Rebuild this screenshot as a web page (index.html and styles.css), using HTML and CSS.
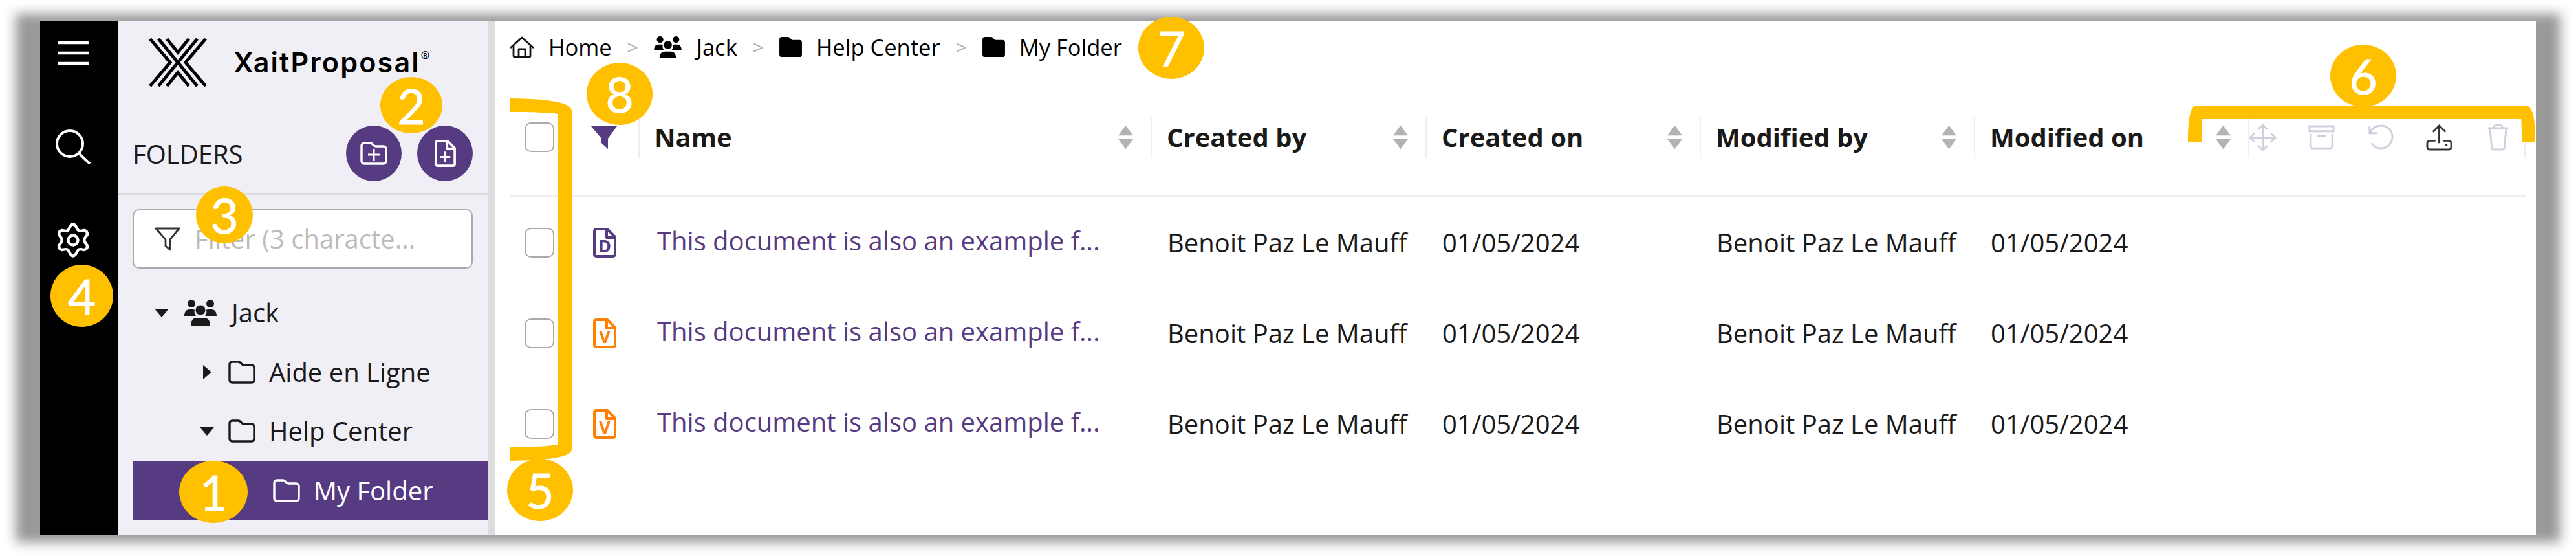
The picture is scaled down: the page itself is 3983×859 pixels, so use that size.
FILE: index.html
```html
<!DOCTYPE html>
<html lang="en">

<head>
    <meta charset="UTF-8" />
    <meta name="viewport" content="width=device-width, initial-scale=1" />
    <title>XaitProposal</title>
    <link rel="stylesheet" href="styles.css">
</head>

<body>
    <!-- shared icons -->
    <svg class="sprite" aria-hidden="true">
        <symbol id="i-group" viewBox="0 0 50 40">
            <circle cx="11" cy="6" r="6" />
            <circle cx="40" cy="6" r="6" />
            <circle cx="25" cy="16" r="7.5" />
            <path d="M0 25c0-6 3-10 8-10h5c2 0 3 1 3 1-1 4 0 7 2 9z" />
            <path d="M50 25c0-6-3-10-8-10h-5c-2 0-3 1-3 1 1 4 0 7-2 9z" />
            <path d="M10 40c0-8 4-12 9-12h12c5 0 9 4 9 12z" />
        </symbol>
        <symbol id="i-folder" viewBox="0 0 42 36">
            <path d="M2 6a4 4 0 0 1 4-4h10c3 0 4 5 8 5h12a4 4 0 0 1 4 4v19a4 4 0 0 1-4 4H6a4 4 0 0 1-4-4z"
                fill="none" stroke="currentColor" stroke-width="3.4" />
        </symbol>
        <symbol id="i-folder-solid" viewBox="0 0 36 32">
            <path d="M0 4a4 4 0 0 1 4-4h10c3 0 4 5 8 5h10a4 4 0 0 1 4 4v19a4 4 0 0 1-4 4H4a4 4 0 0 1-4-4z" />
        </symbol>
        <symbol id="i-doc" viewBox="0 0 36 46">
            <path d="M5 2h17l12 12v27a3 3 0 0 1-3 3H5a3 3 0 0 1-3-3V5a3 3 0 0 1 3-3zM21 2v13h13" fill="none"
                stroke="currentColor" stroke-width="4" stroke-linejoin="round" />
        </symbol>
        <symbol id="i-sort" viewBox="0 0 24 38">
            <path d="M12 0l12 16H0zM0 22h24L12 38z" />
        </symbol>
    </svg>

    <div class="window">
        <nav class="rail">
            <svg class="rail-menu" viewBox="0 0 48 38">
                <path d="M0 3h48M0 19h48M0 35h48" stroke="#fff" stroke-width="4.6" />
            </svg>
            <svg class="rail-search" viewBox="0 0 54 54">
                <g fill="none" stroke="#fff" stroke-width="4">
                    <circle cx="22" cy="22" r="20" />
                    <path d="M36 37l17 16" />
                </g>
            </svg>
            <svg class="rail-gear" viewBox="-25 -27 50 54">
                <g fill="none" stroke="#fff" stroke-width="4.4" stroke-linejoin="round">
                    <path d="M-4 -22Q0 -27 4 -22L6.3 -17.4Q8.500 -13.500 11.900 -14.200L17 -15Q22.500 -14 22 -8.500L18.200 -3.200Q16.500 0 18.200 3.200L22 8.500Q22.500 14 17 15L11.900 14.200Q8.500 13.500 6.300 17.400L4 22Q0 27 -4 22L-6.300 17.400Q-8.500 13.500 -11.900 14.200L-17 15Q-22.500 14 -22 8.500L-18.200 3.200Q-16.500 0 -18.200 -3.200L-22 -8.500Q-22.500 -14 -17 -15L-11.900 -14.200Q-8.500 -13.500 -6.300 -17.400z" />
                    <circle r="7.500" />
                </g>
            </svg>
        </nav>

        <aside class="panel">
            <div class="brand">
                <svg class="brand-mark" viewBox="0 0 92 73">
                    <g fill="none" stroke="#000" stroke-width="5">
                        <path d="M3 0l31 36.500L3 73M16 0l60 73M76 0L16 73M89 0L58 36.500 89 73" />
                        <path d="M29 0l17 21L63 0M29 73l17-21 17 21" />
                    </g>
                </svg>
                <span class="brand-name">XaitProposal</span><span class="brand-reg">®</span>
            </div>
            <div class="panel-head">
                <span class="panel-title">FOLDERS</span>
                <button class="round-btn" aria-label="New folder">
                    <svg width="42" height="38" viewBox="0 0 42 36">
                        <use href="#i-folder" />
                        <path d="M21 11v18M12 20h18" stroke="#fff" stroke-width="3" />
                    </svg>
                </button>
                <button class="round-btn" aria-label="New document">
                    <svg width="33" height="42" viewBox="0 0 36 46">
                        <use href="#i-doc" />
                        <path d="M18 20v18M9.500 29h17" stroke="#fff" stroke-width="3.500" />
                    </svg>
                </button>
            </div>
            <div class="filter">
                <svg width="40" height="37" viewBox="0 0 40 37">
                    <path d="M2 2h36L24 19v16l-7-6V19z" fill="none" stroke="#333" stroke-width="2.800"
                        stroke-linejoin="round" />
                </svg>
                <span>Filter (3 characte...</span>
            </div>
            <ul class="tree">
                <li class="lvl-1">
                    <svg class="caret" viewBox="0 0 22 22"><path d="M0 5h22L11 18z" /></svg>
                    <svg class="tree-group"><use href="#i-group" /></svg>
                    <span>Jack</span>
                </li>
                <li class="lvl-2">
                    <svg class="caret" viewBox="0 0 22 22"><path d="M5 0l13 11L5 22z" /></svg>
                    <svg class="tree-folder"><use href="#i-folder" /></svg>
                    <span>Aide en Ligne</span>
                </li>
                <li class="lvl-2">
                    <svg class="caret" viewBox="0 0 22 22"><path d="M0 5h22L11 18z" /></svg>
                    <svg class="tree-folder"><use href="#i-folder" /></svg>
                    <span>Help Center</span>
                </li>
                <li class="lvl-3 selected">
                    <svg class="tree-folder"><use href="#i-folder" /></svg>
                    <span>My Folder</span>
                </li>
            </ul>
        </aside>

        <main class="content">
            <div class="crumbs">
                <svg class="crumb-home" viewBox="0 0 38 34">
                    <path d="M1 18L19 2l18 16M6 14v16a2 2 0 0 0 2 2h22a2 2 0 0 0 2-2V14M14 32V20h10v12" fill="none"
                        stroke="#111" stroke-width="2.800" stroke-linejoin="round" />
                </svg>
                <span>Home</span>
                <i>&gt;</i>
                <svg class="crumb-group"><use href="#i-group" /></svg>
                <span>Jack</span>
                <i>&gt;</i>
                <svg class="crumb-folder"><use href="#i-folder-solid" /></svg>
                <span>Help Center</span>
                <i>&gt;</i>
                <svg class="crumb-folder"><use href="#i-folder-solid" /></svg>
                <span>My Folder</span>
            </div>

            <div class="table">
                <div class="row head">
                    <div class="pick">
                        <b class="check"></b>
                        <svg class="funnel" viewBox="0 0 40 35"><path d="M0 0h40L26 19v16l-10-9v-7z" /></svg>
                    </div>
                    <div class="th">Name <svg class="sort"><use href="#i-sort" /></svg></div>
                    <div class="th">Created by <svg class="sort"><use href="#i-sort" /></svg></div>
                    <div class="th">Created on <svg class="sort"><use href="#i-sort" /></svg></div>
                    <div class="th">Modified by <svg class="sort"><use href="#i-sort" /></svg></div>
                    <div class="th">Modified on <svg class="sort"><use href="#i-sort" /></svg></div>
                    <div class="tools">
                        <svg viewBox="0 0 42 42">
                            <path d="M21 2v38M2 21h38M14 8l7-7 7 7M14 34l7 7 7-7M8 14l-7 7 7 7M34 14l7 7-7 7" />
                        </svg>
                        <svg viewBox="0 0 42 42">
                            <path d="M2 3h38v8H2zM4 15v20a3 3 0 0 0 3 3h28a3 3 0 0 0 3-3V15M14 19h14" />
                        </svg>
                        <svg viewBox="0 0 42 42">
                            <path d="M4 2v12h12M4 14C9 5 15 2 21 2a18 18 0 1 1-14 28" />
                        </svg>
                        <svg class="on" viewBox="0 0 42 42">
                            <path d="M21 30V2M11 12L21 2l10 10M15 26H6a4 4 0 0 0-4 4v6a4 4 0 0 0 4 4h30a4 4 0 0 0 4-4v-6a4 4 0 0 0-4-4h-9M30 33h4" />
                        </svg>
                        <svg viewBox="0 0 42 42">
                            <path d="M5 6h32M8 6l3 31a4 4 0 0 0 4 3h12a4 4 0 0 0 4-3l3-31M14 6c0-3 2-5 5-5h4c3 0 5 2 5 5" />
                        </svg>
                    </div>
                </div>

                <div class="row">
                    <div class="pick">
                        <b class="check"></b>
                        <span class="doc draft"><svg><use href="#i-doc" /></svg><em>D</em></span>
                    </div>
                    <a class="td link">This document is also an example f...</a>
                    <div class="td">Benoit Paz Le Mauff</div>
                    <div class="td">01/05/2024</div>
                    <div class="td">Benoit Paz Le Mauff</div>
                    <div class="td">01/05/2024</div>
                </div>
                <div class="row">
                    <div class="pick">
                        <b class="check"></b>
                        <span class="doc version"><svg><use href="#i-doc" /></svg><em>V</em></span>
                    </div>
                    <a class="td link">This document is also an example f...</a>
                    <div class="td">Benoit Paz Le Mauff</div>
                    <div class="td">01/05/2024</div>
                    <div class="td">Benoit Paz Le Mauff</div>
                    <div class="td">01/05/2024</div>
                </div>
                <div class="row">
                    <div class="pick">
                        <b class="check"></b>
                        <span class="doc version"><svg><use href="#i-doc" /></svg><em>V</em></span>
                    </div>
                    <a class="td link">This document is also an example f...</a>
                    <div class="td">Benoit Paz Le Mauff</div>
                    <div class="td">01/05/2024</div>
                    <div class="td">Benoit Paz Le Mauff</div>
                    <div class="td">01/05/2024</div>
                </div>
            </div>
        </main>
    </div>

    <!-- numbered callouts over the window -->
    <svg class="bracket bracket-rows" viewBox="0 0 95 560">
        <path d="M0 0C52 1 95 4 95 20V542C95 556 52 559 0 560V539C32 539 62 537 74 535V24C62 22 32 21 0 21z" />
    </svg>
    <svg class="bracket bracket-tools" viewBox="0 0 537 57">
        <path d="M0 57C0 27 2 0 14 0H522C535 0 537 27 537 57H516C516 38 516 27 515 21H22C21 27 21 38 21 57z" />
    </svg>
    <span class="badge badge-1">1</span>
    <span class="badge badge-2">2</span>
    <span class="badge badge-3">3</span>
    <span class="badge badge-4">4</span>
    <span class="badge badge-5">5</span>
    <span class="badge badge-6">6</span>
    <span class="badge badge-7">7</span>
    <span class="badge badge-8">8</span>
</body>

</html>
```
FILE: styles.css
```css
* {
    box-sizing: border-box;
}

body {
    margin: 0;
    width: 3983px;
    height: 859px;
    padding: 32px 62px;
    position: relative;
    overflow: hidden;
    background: #fff;
    color: #1a1a1a;
    font-family: "Open Sans", sans-serif;
    font-size: 40px;
    line-height: 54px;
}

svg {
    display: block;
    flex: none;
    fill: currentColor;
    overflow: visible;
}

.sprite {
    position: absolute;
    width: 0;
    height: 0;
}

.window {
    position: relative;
    display: flex;
    width: 3859px;
    height: 795px;
    background: #fff;
}

/* shadow reaches further out at the sides than above and below */
.window::before {
    content: "";
    position: absolute;
    z-index: -1;
    inset: -11px -38px;
    background: rgba(0, 0, 0, 0.4);
    filter: blur(9px);
}

/* left rail */
.rail {
    width: 121px;
    background: #000;
    display: flex;
    flex-direction: column;
    align-items: center;
    padding-top: 31px;
    padding-right: 20px;
}

.rail-menu {
    width: 48px;
    height: 38px;
}

.rail-search {
    width: 54px;
    height: 54px;
    margin-top: 99px;
}

.rail-gear {
    width: 50px;
    height: 54px;
    margin-top: 90px;
}

/* folder panel */
.panel {
    width: 582px;
    background: #f0eff5;
    border-right: 11px solid #ddd;
}

.brand {
    height: 146px;
    display: flex;
    padding: 28px 0 0 46px;
    color: #000;
}

.brand-mark {
    width: 92px;
    height: 73px;
}

.brand-name {
    margin: 9px 0 0 40px;
    font-family: Inter, sans-serif;
    font-size: 43px;
    font-weight: 600;
    letter-spacing: 2.2px;
}

.brand-reg {
    margin: 0 0 0 1px;
    font-size: 16px;
    font-weight: 700;
    line-height: 50px;
}

.panel-head {
    height: 123px;
    padding: 0 23px 3px 22px;
    border-bottom: 3px solid #ddd;
    display: flex;
    align-items: center;
    gap: 24px;
}

.panel-title {
    flex: 1;
    padding-top: 3px;
}

.round-btn {
    width: 86px;
    height: 86px;
    padding: 0;
    border: 0;
    border-radius: 50%;
    background: #563a82;
    color: #fff;
    display: flex;
    align-items: center;
    justify-content: center;
}

.filter {
    width: 526px;
    height: 92px;
    margin: 22px 0 22px 22px;
    padding-left: 32px;
    display: flex;
    align-items: center;
    gap: 22px;
    background: #fff;
    border: 2px solid #aaa;
    border-radius: 10px;
    color: #bbb;
}

.tree {
    list-style: none;
    margin: 0;
    padding: 0 0 0 22px;
}

.tree li {
    height: 91.7px;
    display: flex;
    align-items: center;
}

.caret {
    width: 22px;
    height: 22px;
}

.lvl-1 {
    padding-left: 34px;
}

.lvl-2 {
    padding-left: 104px;
}

.lvl-3 {
    padding-left: 217px;
}

.tree .selected {
    background: #563a82;
    color: #fff;
}

.tree-group {
    width: 50px;
    height: 40px;
    margin: 0 23px 0 24px;
}

.tree-folder {
    width: 42px;
    height: 36px;
    margin-right: 21px;
}

.lvl-2 .tree-folder {
    margin-left: 22px;
}

/* breadcrumbs */
.content {
    flex: 1;
    padding-left: 23px;
}

.crumbs {
    height: 81px;
    display: flex;
    align-items: center;
    font-size: 34.5px;
    color: #000;
}

.crumbs i {
    margin: 0 24px;
    font-style: normal;
    font-size: 30px;
    color: #aaa;
}

.crumb-home {
    width: 38px;
    height: 34px;
    margin-right: 22px;
}

.crumb-group {
    width: 43px;
    height: 34px;
    margin-right: 23px;
}

.crumb-folder {
    width: 35px;
    height: 31px;
    margin-right: 22px;
}

/* document table */
.table {
    width: 3117px;
}

.row {
    height: 140px;
    display: grid;
    grid-template-columns: 199px 792px 425px 424px 424px 424px 429px;
    align-items: center;
}

.row.head {
    height: 192px;
    padding-top: 9px;
    border-bottom: 3px solid #eeeef4;
}

.pick {
    display: flex;
    align-items: center;
    padding-left: 23px;
}

.check {
    width: 46px;
    height: 46px;
    border: 2px solid #aaa;
    border-radius: 10px;
    background: #fff;
}

.funnel {
    width: 40px;
    height: 35px;
    margin-left: 57px;
    color: #563a82;
}

.th {
    height: 64px;
    padding: 0 27px 0 23px;
    border-left: 2px solid #eeeef4;
    display: flex;
    align-items: center;
    justify-content: space-between;
    font-weight: 700;
}

.sort {
    width: 23px;
    height: 38px;
    color: #b3b3b3;
}

.td {
    padding-left: 26px;
    white-space: nowrap;
}

.link {
    padding-left: 29px;
    margin-top: -7px;
    color: #563a82;
}

.doc {
    position: relative;
    width: 36px;
    height: 46px;
    margin-left: 60px;
}

.doc svg {
    width: 36px;
    height: 46px;
}

.doc em {
    position: absolute;
    inset: 13px 0 0;
    text-align: center;
    font-size: 27px;
    font-style: normal;
    font-weight: 700;
    line-height: 30px;
}

.draft {
    color: #563a82;
}

.version {
    color: #ff8000;
}

.tools {
    height: 64px;
    border-left: 2px solid #eeeef4;
    border-right: 2px solid #eeeef4;
    display: flex;
    align-items: center;
    gap: 50px;
}

.tools svg {
    width: 41px;
    height: 41px;
    fill: none;
    stroke: #d0cfdd;
    stroke-width: 3;
}

.tools .on {
    stroke: #333;
}

/* callouts */
.badge {
    position: absolute;
    width: 102px;
    height: 96px;
    border-radius: 50%;
    background: #ffc000;
    color: #fff;
    font-family: Lato, sans-serif;
    font-size: 75px;
    -webkit-text-stroke: 0.8px #fff;
    display: flex;
    align-items: center;
    justify-content: center;
}

.badge-1 {
    left: 277px;
    top: 712px;
    width: 106px;
}

.badge-2 {
    left: 588px;
    top: 119px;
    width: 96px;
    height: 87px;
}

.badge-3 {
    left: 303px;
    top: 288px;
    width: 88px;
    height: 88px;
}

.badge-4 {
    left: 78px;
    top: 409px;
    width: 97px;
}

.badge-5 {
    left: 784px;
    top: 709px;
}

.badge-6 {
    left: 3603px;
    top: 69px;
}

.badge-7 {
    left: 1760px;
    top: 26px;
}

.badge-8 {
    left: 907px;
    top: 97px;
}

.bracket {
    position: absolute;
    color: #ffc000;
}

.bracket-rows {
    left: 789px;
    top: 152px;
    width: 95px;
    height: 560px;
}

.bracket-tools {
    left: 3383px;
    top: 163px;
    width: 537px;
    height: 57px;
}
```
